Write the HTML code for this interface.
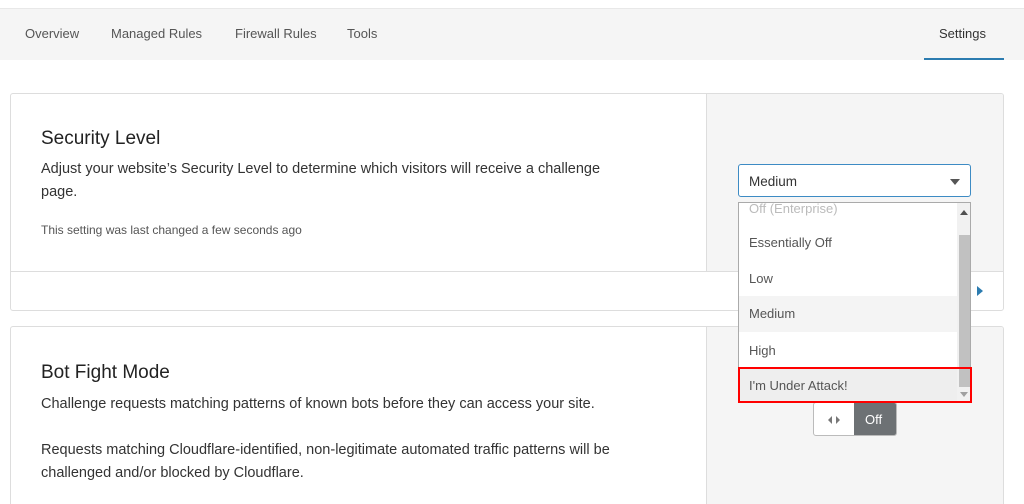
<!DOCTYPE html>
<html><head><meta charset="utf-8"><style>
*{box-sizing:border-box;margin:0;padding:0}
html,body{width:1024px;height:504px;overflow:hidden}
body{background:#fff;font-family:"Liberation Sans",sans-serif;position:relative;color:#313131}
.nav{position:absolute;left:0;top:8px;width:1024px;height:52px;background:#f5f5f5;border-top:1px solid #e8e8e8}
.nav span{position:absolute;top:17px;font-size:13px;color:#555}
.ul{position:absolute;left:924px;top:58px;width:80px;height:2px;background:#2c7cb0}
.card{position:absolute;left:10px;width:994px;border:1px solid #ddd;border-radius:3px;background:#fff;overflow:hidden}
.rp{position:absolute;left:695px;top:0;width:300px;background:#f5f5f5;border-left:1px solid #ddd}
h2{position:absolute;left:30px;font-size:19px;font-weight:normal;color:#222}
p{position:absolute;left:30px;font-size:14.5px;line-height:23px;color:#333}
.sel{position:absolute;left:738px;top:164px;width:233px;height:33px;border:1px solid #3d8bc4;border-radius:3px;background:#fff;font-size:13.5px;padding:9px 10px;color:#333}
.dd{position:absolute;left:738px;top:202px;width:233px;height:200px;border:1px solid #aaa;background:#fff;overflow:hidden}
.opt{position:absolute;left:0;width:218px;height:36px;font-size:13px;color:#555;padding:10px 10px}
.sb{position:absolute;left:218px;top:0;width:14px;height:200px;background:#f1f1f1}
</style></head><body>
<div class="nav">
<span style="left:25px">Overview</span><span style="left:111px">Managed Rules</span><span style="left:235px">Firewall Rules</span><span style="left:347px">Tools</span><span style="left:939px;color:#333">Settings</span>
</div>
<div class="ul"></div>
<div class="card" style="top:93px;height:218px">
<div class="rp" style="height:177px"></div>
<div style="position:absolute;left:0;top:177px;width:994px;height:1px;background:#ddd"></div>
<h2 style="top:34px">Security Level</h2>
<p style="top:64px;width:570px">Adjust your website’s Security Level to determine which visitors will receive a challenge page.</p>
<div style="position:absolute;left:30px;top:129px;font-size:12px;color:#555">This setting was last changed a few seconds ago</div>
<svg style="position:absolute;left:966px;top:192px" width="6" height="10"><path d="M0 0L6 5L0 10Z" fill="#2c7cb0"/></svg>
</div>
<div class="card" style="top:326px;height:200px">
<div class="rp" style="height:200px"></div>
<h2 style="top:35px">Bot Fight Mode</h2>
<p style="top:66px">Challenge requests matching patterns of known bots before they can access your site.</p>
<p style="top:112px;width:640px">Requests matching Cloudflare-identified, non-legitimate automated traffic patterns will be challenged and/or blocked by Cloudflare.</p>
</div>
<div style="position:absolute;left:813px;top:402px;width:84px;height:34px;border:1px solid #bbb;border-radius:3px;background:#fff;overflow:hidden">
<svg style="position:absolute;left:14px;top:13px" width="12" height="8"><path d="M4 0L0 4L4 8Z M8 0L12 4L8 8Z" fill="#777"/></svg>
<div style="position:absolute;left:40px;top:0;width:44px;height:34px;background:#6d7174;color:#fff;font-size:13px;padding:9px 0 0 11px">Off</div>
</div>
<div class="sel">Medium<svg style="position:absolute;right:10px;top:14px" width="10" height="6"><path d="M0 0H10L5 6Z" fill="#555"/></svg></div>
<div class="dd">
<div class="opt" style="top:-12px;color:#bbb">Off (Enterprise)</div>
<div class="opt" style="top:22px">Essentially Off</div>
<div class="opt" style="top:58px">Low</div>
<div class="opt" style="top:93px;background:#f4f4f4">Medium</div>
<div class="opt" style="top:130px">High</div>
<div class="opt" style="top:165px;background:#eeeeee">I'm Under Attack!</div>
<div class="sb"><div style="position:absolute;left:2px;top:32px;width:11px;height:152px;background:#c1c1c1"></div>
<svg style="position:absolute;left:3px;top:7px" width="8" height="5"><path d="M0 5L4 0L8 5Z" fill="#505050"/></svg>
<svg style="position:absolute;left:3px;top:189px" width="8" height="5"><path d="M0 0L4 5L8 0Z" fill="#a0a0a0"/></svg></div>
</div>
<div style="position:absolute;left:738px;top:367px;width:234px;height:36px;border:2px solid #f00"></div>
</body></html>
